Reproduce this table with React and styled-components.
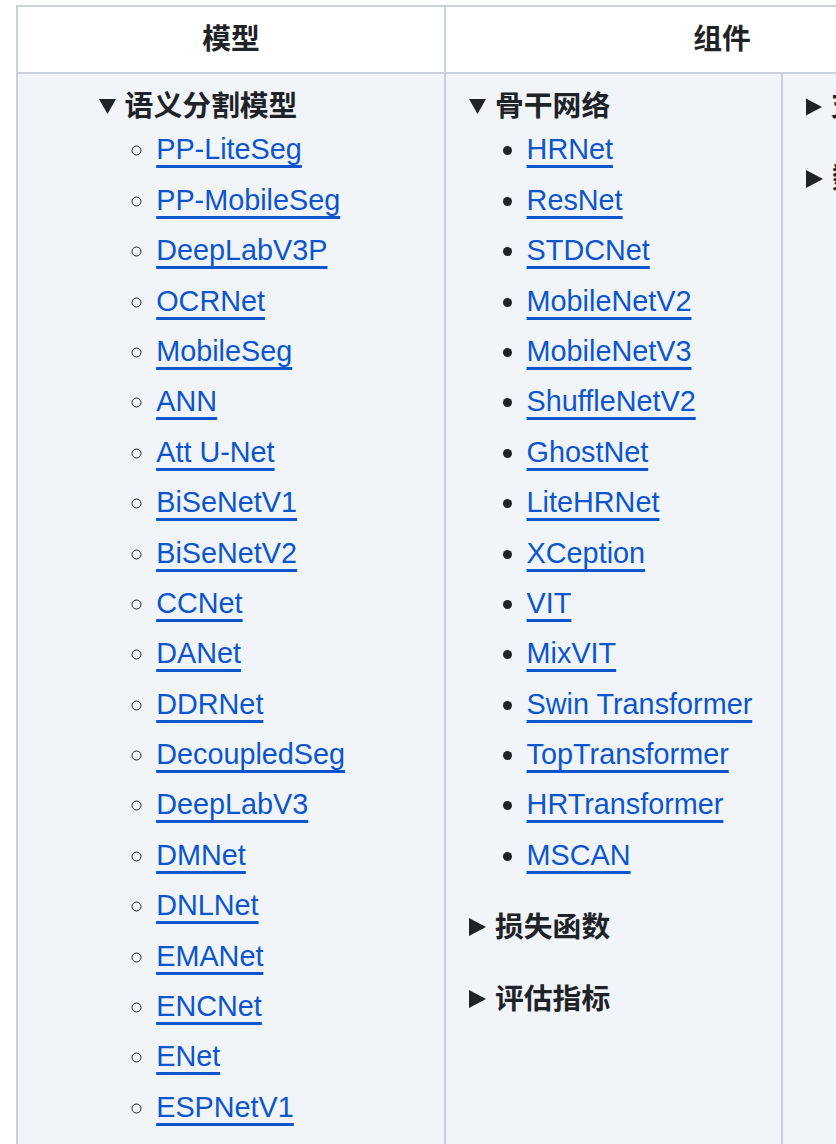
import React from "react";
import styled, { createGlobalStyle } from "styled-components";

const GlobalStyle = createGlobalStyle`
  html, body {
    margin: 0;
    padding: 0;
    background: #ffffff;
    overflow: hidden;
  }
  body {
    font-family: "Liberation Sans", "Noto Sans CJK SC", sans-serif;
    color: #1f2328;
  }
`;

const Page = styled.div`
  padding: 5px 0 0 16px;
`;

const Table = styled.table`
  box-sizing: border-box;
  width: 984px;
  table-layout: fixed;
  border-collapse: separate;
  border-spacing: 0;
  border-left: 2px solid #c9d1db;
  border-top: 2px solid #c9d1db;
  font-size: 28.8px;
  line-height: 43.2px;
`;

const Row = styled.tr`
  background: ${(props) => (props.$shaded ? "#f1f5f9" : "#ffffff")};
`;

const Cell = styled.td`
  box-sizing: border-box;
  padding: 11px 23px;
  border-right: 2px solid #c9d1db;
  border-bottom: 2px solid #c9d1db;
  vertical-align: ${(props) => (props.$head ? "bottom" : "top")};
  text-align: ${(props) => (props.$head ? "center" : "left")};
  font-weight: ${(props) => (props.$head ? 700 : 400)};
`;

const Outer = styled.ul`
  margin: 0;
  padding-left: 57.6px;
  list-style: none;
`;

const Group = styled.details`
  margin: 0 0 28.8px 0;
`;

const Summary = styled.summary`
  display: flex;
  align-items: center;
  gap: 9px;
  list-style: none;
  font-weight: 700;
  cursor: pointer;
  white-space: nowrap;
  &::-webkit-details-marker {
    display: none;
  }
`;

const Items = styled.ul`
  margin: 0;
  padding-left: 57.6px;
  list-style: ${(props) => props.$marker};
`;

const Item = styled.li`
  & + & {
    margin-top: 7.2px;
  }
  &::marker {
    color: #1f2328;
  }
`;

const Link = styled.a`
  color: #0c55cf;
  text-decoration: underline;
  text-decoration-thickness: 2.8px;
  text-underline-offset: 6px;
  white-space: nowrap;
`;

const Caret = ({ open }) =>
  open ? (
    <svg width="17" height="15" viewBox="0 0 17 15">
      <polygon points="0,0 17,0 8.5,15" fill="#1f2328" />
    </svg>
  ) : (
    <svg width="17" height="18" viewBox="0 0 17 18">
      <polygon points="0,0 17,9 0,18" fill="#1f2328" />
    </svg>
  );

const models = [
  "PP-LiteSeg", "PP-MobileSeg", "DeepLabV3P", "OCRNet", "MobileSeg", "ANN",
  "Att U-Net", "BiSeNetV1", "BiSeNetV2", "CCNet", "DANet", "DDRNet",
  "DecoupledSeg", "DeepLabV3", "DMNet", "DNLNet", "EMANet", "ENCNet",
  "ENet", "ESPNetV1",
];

const backbones = [
  "HRNet", "ResNet", "STDCNet", "MobileNetV2", "MobileNetV3", "ShuffleNetV2",
  "GhostNet", "LiteHRNet", "XCeption", "VIT", "MixVIT", "Swin Transformer",
  "TopTransformer", "HRTransformer", "MSCAN",
];

function Section({ title, open, items, marker }) {
  return (
    <Group open={open}>
      <Summary>
        <Caret open={open} />
        <span>{title}</span>
      </Summary>
      {items && (
        <Items $marker={marker}>
          {items.map((name) => (
            <Item key={name}>
              <Link href="#">{name}</Link>
            </Item>
          ))}
        </Items>
      )}
    </Group>
  );
}

export default function App() {
  return (
    <Page>
      <GlobalStyle />
      <Table>
        <colgroup>
          <col style={{ width: 428 }} />
          <col style={{ width: 337 }} />
          <col style={{ width: 217 }} />
        </colgroup>
        <tbody>
          <Row>
            <Cell $head>模型</Cell>
            <Cell $head colSpan={2}>组件</Cell>
          </Row>
          <Row $shaded>
            <Cell>
              <Outer>
                <Section title="语义分割模型" open items={models} marker="circle" />
              </Outer>
            </Cell>
            <Cell>
              <Section title="骨干网络" open items={backbones} marker="disc" />
              <Section title="损失函数" />
              <Section title="评估指标" />
            </Cell>
            <Cell>
              <Section title="支持数据集" />
              <Section title="数据增强" />
            </Cell>
          </Row>
        </tbody>
      </Table>
    </Page>
  );
}
